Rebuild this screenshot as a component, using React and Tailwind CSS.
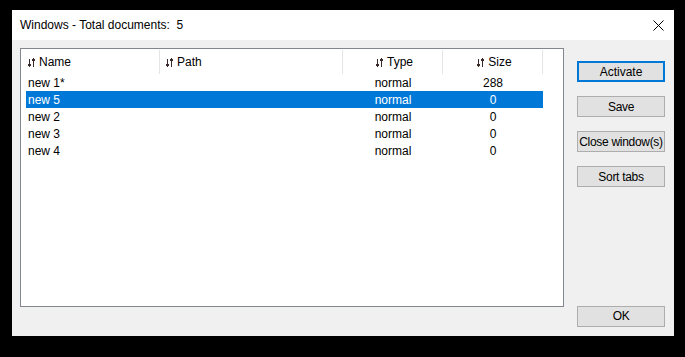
import React from 'react';

const rows = [
  { name: 'new 1*', path: '', type: 'normal', size: '288' },
  { name: 'new 5', path: '', type: 'normal', size: '0', selected: true },
  { name: 'new 2', path: '', type: 'normal', size: '0' },
  { name: 'new 3', path: '', type: 'normal', size: '0' },
  { name: 'new 4', path: '', type: 'normal', size: '0' },
];

// small down/up arrows drawn before each header label
const SortIcon = () => (
  <svg width="8" height="9" viewBox="0 0 8 9" className="shrink-0" shapeRendering="crispEdges">
    <path d="M1.5 0.5V8M0 6.5L1.5 8L3 6.5" stroke="#3a2a2a" strokeWidth="1" fill="none" />
    <path d="M5.5 1V8.5M4 2.5L5.5 1L7 2.5" stroke="#3a2a2a" strokeWidth="1" fill="none" />
  </svg>
);

const Btn = ({ children, active }) => (
  <button
    className={
      active
        ? 'w-[88px] h-[21px] bg-[#e1e1e1] border-2 border-[#0078d7] text-[12px] text-black leading-none whitespace-nowrap px-0'
        : 'w-[88px] h-[21px] bg-[#e1e1e1] border border-[#adadad] text-[12px] text-black leading-none whitespace-nowrap px-0 tracking-[-0.3px]'
    }
  >
    {children}
  </button>
);

export default function App() {
  return (
    <div className="w-[685px] h-[357px] bg-black pt-[10px] pl-[12px]" style={{ fontFamily: '"Liberation Sans", Arial, sans-serif' }}>
      <div className="w-[662px] h-[326px] flex flex-col">
        {/* title bar */}
        <div className="h-[30px] bg-white flex items-center justify-between pl-[8px] pr-[10px]">
          <span className="text-[12px] text-black">Windows - Total documents:&nbsp; 5</span>
          <svg width="11" height="11" viewBox="0 0 11 11">
            <path d="M0.5 0.5L10.5 10.5M10.5 0.5L0.5 10.5" stroke="#000" strokeWidth="1" />
          </svg>
        </div>

        {/* body */}
        <div className="flex-1 bg-[#f0f0f0] flex pt-[8px] pl-[8px] pr-[9px] pb-[9px]">
          <div className="w-[544px] h-[259px] bg-white border border-[#828790] pl-[5px] text-[12px] text-black">
            <div className="flex h-[25px] pt-[1px]">
              <div className="w-[134px] border-r border-[#e5e5e5] flex items-center gap-[3px] pl-[2px]">
                <SortIcon /> <span>Name</span>
              </div>
              <div className="w-[183px] border-r border-[#e5e5e5] flex items-center gap-[3px] pl-[6px]">
                <SortIcon /> <span>Path</span>
              </div>
              <div className="w-[100px] border-r border-[#e5e5e5] flex items-center justify-center gap-[3px] pl-[4px]">
                <SortIcon /> <span>Type</span>
              </div>
              <div className="w-[100px] border-r border-[#e5e5e5] flex items-center justify-center gap-[3px] pl-[4px]">
                <SortIcon /> <span>Size</span>
              </div>
            </div>
            {rows.map((r) => (
              <div key={r.name} className={r.selected ? 'flex h-[17px] items-center w-[517px] bg-[#0078d7] text-white' : 'flex h-[17px] items-center w-[517px]'}>
                <div className="w-[134px] pl-[2px]">{r.name}</div>
                <div className="w-[183px] pl-[6px]">{r.path}</div>
                <div className="w-[100px] text-center">{r.type}</div>
                <div className="w-[100px] text-center">{r.size}</div>
              </div>
            ))}
          </div>

          <div className="flex-1 flex flex-col items-end pt-[13px]">
            <div className="flex flex-col gap-[14px]">
              <Btn active>Activate</Btn>
              <Btn>Save</Btn>
              <Btn>Close window(s)</Btn>
              <Btn>Sort tabs</Btn>
            </div>
            <div className="mt-auto">
              <Btn>OK</Btn>
            </div>
          </div>
        </div>
      </div>
    </div>
  );
}
